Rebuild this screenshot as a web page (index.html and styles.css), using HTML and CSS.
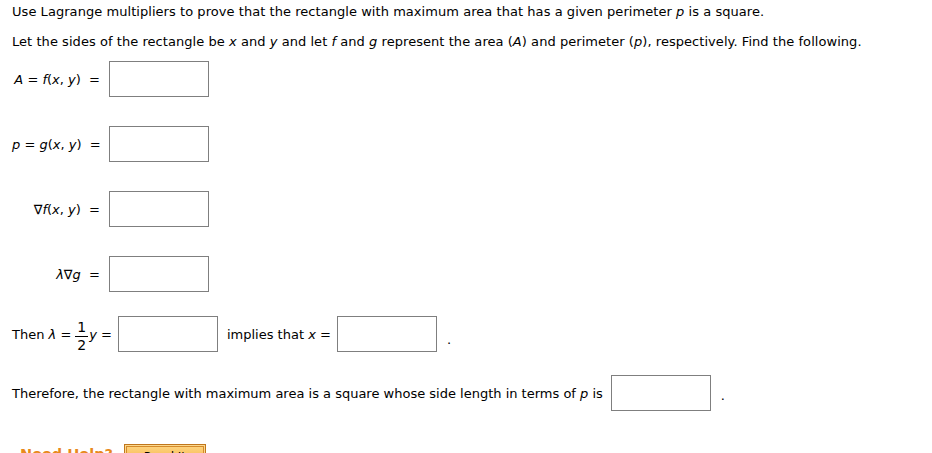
FILE: index.html
```html
<!DOCTYPE html>
<html>
<head>
<meta charset="utf-8">
<link rel="stylesheet" href="styles.css">
</head>
<body>
<div class="page">
  <p class="intro">Use Lagrange multipliers to prove that the rectangle with maximum area that has a given perimeter <i>p</i> is a square.</p>
  <p class="intro second">Let the sides of the rectangle be <i>x</i> and <i>y</i> and let <i>f</i> and <i>g</i> represent the area (<i>A</i>) and perimeter (<i>p</i>), respectively. Find the following.</p>

  <div class="eqs">
    <div class="lbl"><i>A</i> = <i>f</i>(<i>x</i>, <i>y</i>) &nbsp;=</div>
    <div class="box"></div>
    <div class="lbl"><i>p</i> = <i>g</i>(<i>x</i>, <i>y</i>) &nbsp;=</div>
    <div class="box"></div>
    <div class="lbl">∇<i>f</i>(<i>x</i>, <i>y</i>) &nbsp;=</div>
    <div class="box"></div>
    <div class="lbl"><i>λ</i>∇<i>g</i> &nbsp;=</div>
    <div class="box"></div>
  </div>

  <div class="then">
    <span class="txt">Then <i>λ</i> =</span>
    <span class="frac"><span class="num">1</span><span class="den">2</span></span>
    <span class="txt"><i>y</i> =</span>
    <div class="box"></div>
    <span class="txt implies">implies that <i>x</i> =</span>
    <div class="box"></div>
    <span class="dot">.</span>
  </div>

  <div class="therefore">
    <span class="txt">Therefore, the rectangle with maximum area is a square whose side length in terms of <i>p</i> is</span>
    <div class="box"></div>
    <span class="dot2">.</span>
  </div>

  <div class="help">
    <span class="need">Need Help?</span>
    <span class="btn"><span class="btn-in">Read It</span></span>
  </div>
</div>
</body>
</html>
```

FILE: styles.css
```css
html, body {
  margin: 0;
  padding: 0;
  background: #ffffff;
}
body {
  font-family: "DejaVu Sans", Verdana, sans-serif;
  font-size: 13px;
  color: #000000;
}
.page {
  padding: 4px 0 0 12px;
  overflow: hidden;
  height: 449px;
}
.intro {
  margin: 0;
  line-height: 16px;
  letter-spacing: 0.05px;
}
.intro.second {
  margin-top: 14px;
}
i {
  font-style: italic;
}
.eqs {
  display: grid;
  grid-template-columns: 88px 100px;
  column-gap: 9px;
  row-gap: 29px;
  align-items: center;
  margin-top: 11px;
}
.lbl {
  text-align: right;
  white-space: nowrap;
  font-size: 13px;
}
.box {
  width: 98px;
  height: 34px;
  border: 1px solid #7f7f7f;
  background: #fff;
  flex: none;
}
.then {
  display: flex;
  align-items: center;
  margin-top: 24px;
  height: 36px;
}
.then .txt {
  white-space: nowrap;
}
.frac {
  display: inline-flex;
  flex-direction: column;
  align-items: center;
  margin: 5px 1px 0 4px;
  font-size: 14px;
  line-height: 13px;
}
.frac .num {
  border-bottom: 1px solid #000;
  padding: 0 2px 2px;
}
.frac .den {
  padding-top: 2px;
}
.then .txt + .box {
  margin-left: 6px;
}
.implies {
  margin-left: 9px;
  margin-right: 0;
}
.dot {
  margin-left: 10px;
  position: relative;
  top: 5px;
}
.therefore {
  display: flex;
  align-items: center;
  margin-top: 23px;
  height: 36px;
}
.therefore .txt {
  white-space: nowrap;
  margin-right: 8px;
}
.dot2 {
  margin-left: 10px;
  position: relative;
  top: 2px;
}
.help {
  display: flex;
  align-items: flex-start;
  margin-top: 33px;
  padding-left: 8px;
}
.need {
  color: #e8891c;
  font-size: 14.5px;
  font-weight: bold;
  line-height: 18px;
  margin-top: 1px;
}
.btn {
  margin-left: 11px;
  border: 1px solid #c0761c;
  background: #fbd98e;
  padding: 1px;
}
.btn-in {
  display: block;
  width: 76px;
  height: 20px;
  border: 1px solid #d58a2c;
  background: linear-gradient(#fdd27c, #f6a93a);
  text-align: center;
  font-size: 12px;
  line-height: 20px;
}
```
